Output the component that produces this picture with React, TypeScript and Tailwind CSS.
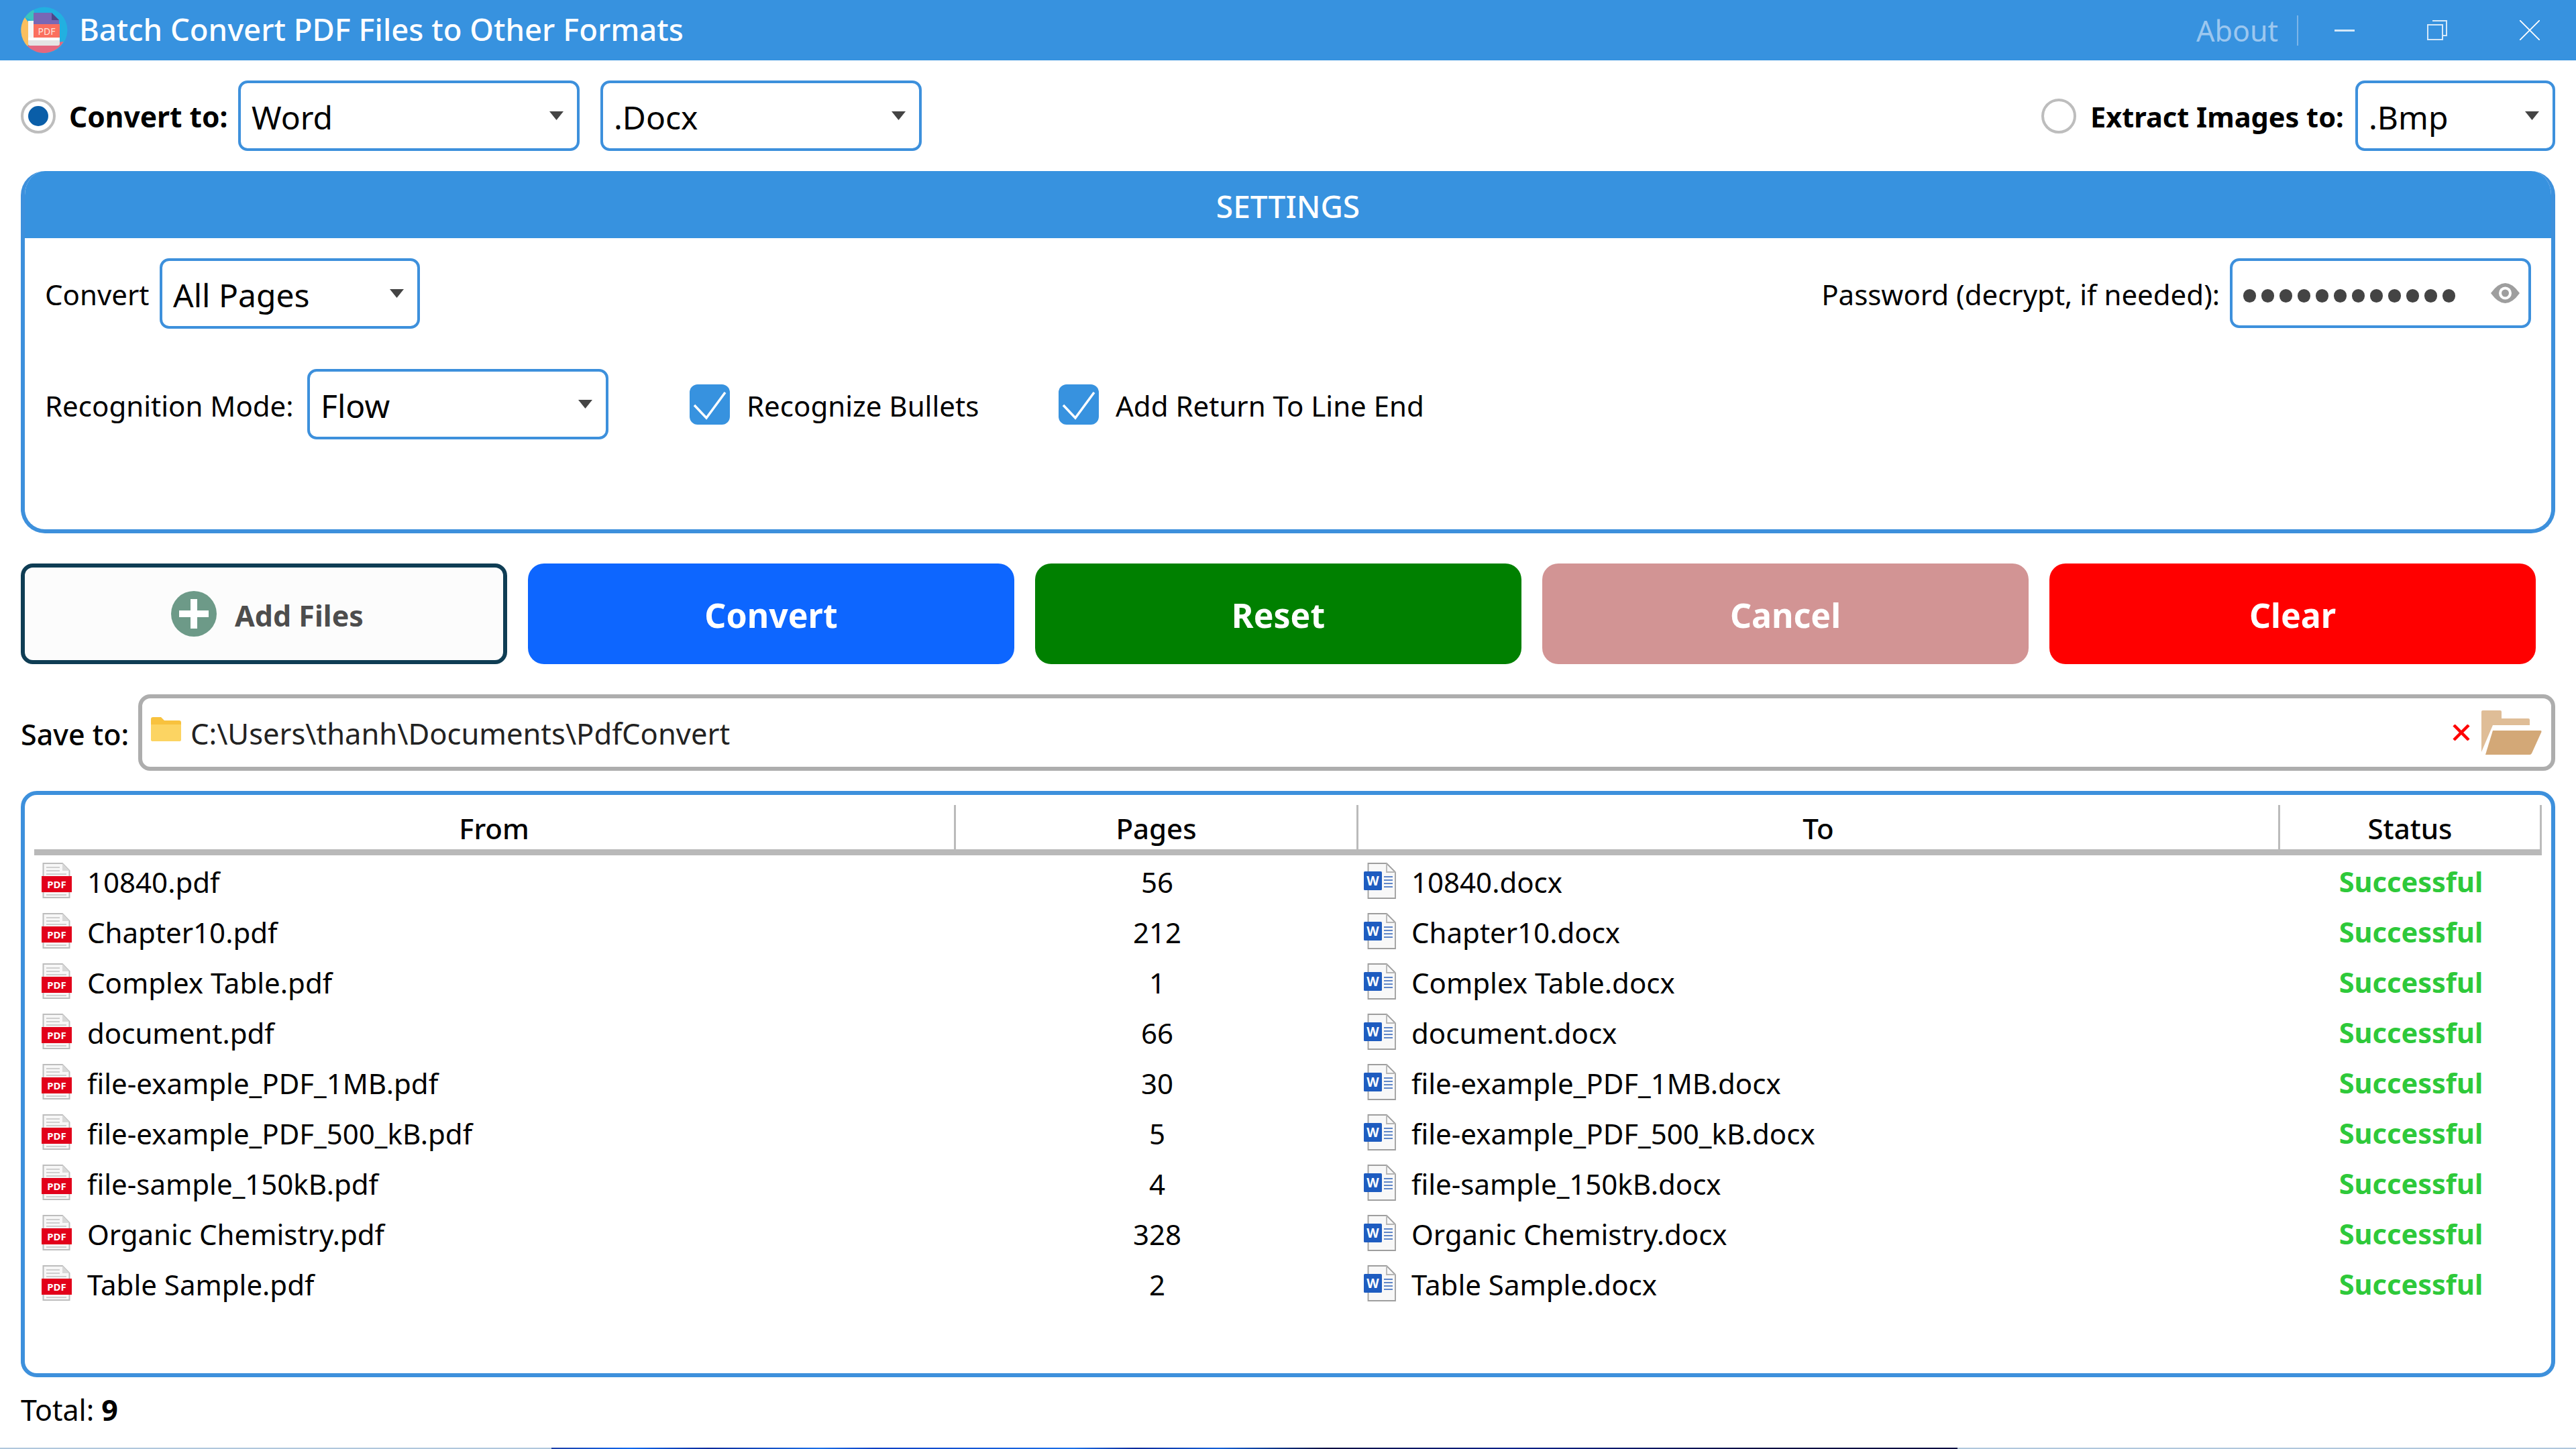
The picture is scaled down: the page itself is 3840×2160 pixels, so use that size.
import React from 'react';

const FONT = "font-['Noto_Sans','Open_Sans',sans-serif]";

const FILES = [
  { name: '10840', pages: 56 },
  { name: 'Chapter10', pages: 212 },
  { name: 'Complex Table', pages: 1 },
  { name: 'document', pages: 66 },
  { name: 'file-example_PDF_1MB', pages: 30 },
  { name: 'file-example_PDF_500_kB', pages: 5 },
  { name: 'file-sample_150kB', pages: 4 },
  { name: 'Organic Chemistry', pages: 328 },
  { name: 'Table Sample', pages: 2 },
];

function AppLogo() {
  return (
    <svg viewBox="0 0 70 70" className="w-[70px] h-[70px] shrink-0">
      <circle cx="35" cy="35" r="34.5" fill="#22b0e0" />
      <path d="M6 16 A34.5 34.5 0 0 1 19 4.5 L24 24 Z" fill="#3cc4c0" />
      <path d="M6 16 A34.5 34.5 0 0 0 10 59 L24 40 Z" fill="#fbbf5e" />
      <path d="M10 58 L64 52 A34.5 34.5 0 0 1 10 59 Z" fill="#e4677f" />
      <rect x="11" y="21" width="10" height="27" fill="#f6f6f6" />
      <path d="M11 46 H58 V55 Q58 58 55 58 H14 Q11 58 11 55 Z" fill="#e4e4e4" />
      <path d="M11 46 H58 V50 H11 Z" fill="#ffffff" />
      <path d="M19 9 H46 L57 20 V27 H19 Z" fill="#7867b5" />
      <path d="M46 9 L57 20 H46 Z" fill="#4d4888" />
      <rect x="19" y="26" width="39" height="20" fill="#fb6f5e" />
      <text x="38.5" y="42" textAnchor="middle" fontSize="14" fontFamily="Noto Sans" fill="#fde6dd">PDF</text>
    </svg>
  );
}

function Arrow() {
  return (
    <svg viewBox="0 0 21 13" className="w-[21px] h-[13px] shrink-0">
      <path d="M0 0 H21 L10.5 13 Z" fill="#444444" />
    </svg>
  );
}

function Select({ value, className }: { value: string; className: string }) {
  return (
    <div className={`flex items-center justify-between h-[105px] pl-[16px] pr-[20px] border-[4px] border-[#3d90dc] rounded-[14px] bg-white shrink-0 ${className}`}>
      <span className="mt-[5px] text-[48px] leading-none text-black">{value}</span>
      <Arrow />
    </div>
  );
}

function Radio({ checked }: { checked?: boolean }) {
  return (
    <div className="w-[52px] h-[52px] rounded-full border-[4px] border-[#bdbdbd] flex items-center justify-center shrink-0 bg-white">
      {checked && <div className="w-[30px] h-[30px] rounded-full bg-[#0a5ea8]" />}
    </div>
  );
}

function Checkbox() {
  return (
    <div className="w-[60px] h-[60px] rounded-[12px] bg-[#3792df] flex items-center justify-center shrink-0">
      <svg viewBox="0 0 60 60" className="w-[60px] h-[60px]">
        <path d="M7 31 L25 50 L53 12" fill="none" stroke="white" strokeWidth="3.5" />
      </svg>
    </div>
  );
}

function PdfIcon() {
  return (
    <svg viewBox="0 0 45 53" className="w-[45px] h-[53px] shrink-0">
      <path d="M2.5 1 H31 L41.5 12 V52 H2.5 Z" fill="#f7f7f7" stroke="#bdbdbd" strokeWidth="2" />
      <path d="M31 1 V12 H41.5 Z" fill="#d8d8d8" />
      <path d="M7 7 H27 M7 12 H27 M7 17 H37 M7 48 H37" stroke="#cfcfcf" strokeWidth="2" />
      <rect x="0" y="20" width="45" height="24" fill="#e2001a" />
      <text x="22.5" y="37.5" textAnchor="middle" fontSize="15" fontWeight="700" fontFamily="Noto Sans" fill="#ffffff">PDF</text>
    </svg>
  );
}

function WordIcon() {
  return (
    <svg viewBox="0 0 48 54" className="w-[48px] h-[54px] shrink-0">
      <path d="M6.5 1 H34 L47 14 V53 H6.5 Z" fill="#f8f8f8" stroke="#9e9e9e" strokeWidth="1.8" />
      <path d="M34 1 V14 H47" fill="none" stroke="#b5b5b5" strokeWidth="1.8" />
      <rect x="0" y="13" width="27" height="28" rx="1.5" fill="#1e5cc0" />
      <text x="13.5" y="33.5" textAnchor="middle" fontSize="19" fontWeight="700" fontFamily="Noto Sans" fill="#ffffff">W</text>
      <path d="M30 21 H43 M30 26 H43 M30 31 H43 M30 36 H43" stroke="#5f86c8" strokeWidth="2" />
    </svg>
  );
}

function OpenFolder() {
  return (
    <svg viewBox="0 0 90 66" className="w-[90px] h-[66px] shrink-0">
      <path d="M0 2 q0 -2 2 -2 h26 q2 0 2 2 v10 h40 q2 0 2 2 v8 H17 L0 62 Z" fill="#dfbd97" />
      <path d="M17 30 H88 q2 0 1.5 2 L75 64 q-1 2 -3 2 H6 Z" fill="#d3a877" />
    </svg>
  );
}

function SmallFolder() {
  return (
    <svg viewBox="0 0 45 36" className="w-[45px] h-[36px] shrink-0">
      <path d="M0 3 q0 -3 3 -3 h12 l5 5 h22 q3 0 3 3 v25 q0 3 -3 3 H3 q-3 0 -3 -3 Z" fill="#f8c23e" />
      <path d="M0 11 H45 V33 q0 3 -3 3 H3 q-3 0 -3 -3 Z" fill="#fcd462" />
    </svg>
  );
}

function Eye() {
  return (
    <svg viewBox="0 0 43 30" className="w-[43px] h-[30px] shrink-0">
      <path d="M0 15 Q21.5 -15 43 15 Q21.5 45 0 15 Z" fill="#9e9e9e" />
      <circle cx="21.5" cy="15" r="9.5" fill="#ffffff" />
      <circle cx="21.5" cy="15" r="5.5" fill="#9e9e9e" />
    </svg>
  );
}

function ActionButton({ label, className }: { label: string; className: string }) {
  return (
    <div className={`w-[725px] h-full pt-[4px] rounded-[24px] flex items-center justify-center text-white font-bold text-[50px] ${className}`}>
      {label}
    </div>
  );
}

export default function App() {
  return (
    <div className={`w-[3840px] h-[2160px] flex flex-col bg-white overflow-hidden ${FONT}`}>
      {/* Title bar */}
      <div className="h-[90px] bg-[#3792df] flex items-center pl-[31px] shrink-0">
        <AppLogo />
        <span className="ml-[17px] mb-[2px] text-[45.5px] font-medium text-white leading-none">Batch Convert PDF Files to Other Formats</span>
        <div className="ml-auto flex items-center">
          <span className="text-[43px] text-[#9cc7ef] leading-none">About</span>
          <div className="ml-[28px] w-[2px] h-[45px] bg-[#7db5e8]" />
          <div className="ml-[54px] w-[30px] h-[3px] bg-[#d5e8f8]" />
          <svg viewBox="0 0 30 30" className="ml-[108px] w-[30px] h-[30px]">
            <path d="M8 1 H29 V23 H24 M1 7 H23 V29 H1 Z" fill="none" stroke="#d5e8f8" strokeWidth="2" />
          </svg>
          <svg viewBox="0 0 30 30" className="ml-[108px] mr-[54px] w-[30px] h-[30px]">
            <path d="M0 0 L30 30 M30 0 L0 30" stroke="#ffffff" strokeWidth="1.8" />
          </svg>
        </div>
      </div>

      {/* Convert target */}
      <div className="mt-[30px] h-[105px] px-[31px] flex items-center shrink-0">
        <Radio checked />
        <span className="ml-[20px] w-[252px] mt-[4px] text-[42.5px] font-bold text-black leading-none whitespace-nowrap">Convert to:</span>
        <Select value="Word" className="w-[509px]" />
        <Select value=".Docx" className="ml-[31px] w-[479px]" />
        <div className="ml-auto flex items-center">
          <Radio />
          <span className="ml-[21px] w-[395px] mt-[4px] text-[41.5px] font-bold text-black leading-none whitespace-nowrap">Extract Images to:</span>
          <Select value=".Bmp" className="w-[298px]" />
        </div>
      </div>

      {/* Settings */}
      <div className="mt-[30px] mx-[31px] h-[540px] border-[6px] border-t-0 border-[#3d90dc] rounded-[36px] overflow-hidden shrink-0">
        <div className="h-[100px] pt-[4px] bg-[#3792df] flex items-center justify-center text-white text-[46px] font-medium -mx-[6px]">SETTINGS</div>
        <div className="pt-[30px] pl-[30px] pr-[30px] text-[42px] text-black">
          <div className="flex items-center h-[104px]">
            <span className="w-[171px] mt-[4px] leading-none">Convert</span>
            <Select value="All Pages" className="w-[388px]" />
            <span className="ml-auto mr-[15px] mt-[4px] leading-none">Password (decrypt, if needed):</span>
            <div className="w-[449px] h-[104px] border-[4px] border-[#3d90dc] rounded-[14px] flex items-center pl-[16px] pr-[13px]">
              <div className="flex gap-[8px] mt-[8px]">
                {Array.from({ length: 12 }).map((_, i) => (
                  <span key={i} className="w-[19px] h-[20px] rounded-full bg-[#444444]" />
                ))}
              </div>
              <div className="ml-auto"><Eye /></div>
            </div>
          </div>
          <div className="flex items-center h-[105px] mt-[61px]">
            <span className="w-[391px] mt-[4px] leading-none">Recognition Mode:</span>
            <Select value="Flow" className="w-[449px]" />
            <div className="ml-[121px]"><Checkbox /></div>
            <span className="ml-[25px] w-[465px] mt-[4px] leading-none">Recognize Bullets</span>
            <Checkbox />
            <span className="ml-[25px] mt-[4px] leading-none">Add Return To Line End</span>
          </div>
        </div>
      </div>

      {/* Actions */}
      <div className="mt-[45px] h-[150px] pl-[31px] flex gap-[31px] shrink-0">
        <div className="w-[725px] h-full pl-[10px] border-[6px] border-[#0f3d54] rounded-[18px] bg-[#fcfcfc] flex items-center justify-center gap-[27px]">
          <svg viewBox="0 0 68 68" className="w-[68px] h-[68px]">
            <circle cx="34" cy="34" r="34" fill="#6d9a88" />
            <path d="M29 12 H39 V29 H56 V39 H39 V56 H29 V39 H12 V29 H29 Z" fill="#ffffff" />
          </svg>
          <span className="mt-[4px] text-[43px] font-bold text-[#4d4d4d] leading-none">Add Files</span>
        </div>
        <ActionButton label="Convert" className="bg-[#0d66ff]" />
        <ActionButton label="Reset" className="bg-[#008000]" />
        <ActionButton label="Cancel" className="bg-[#d29494]" />
        <ActionButton label="Clear" className="bg-[#ff0000]" />
      </div>

      {/* Save to */}
      <div className="mt-[45px] h-[114px] px-[31px] flex items-center shrink-0">
        <span className="w-[175px] mt-[4px] text-[43px] font-medium text-black leading-none">Save to:</span>
        <div className="flex-1 h-full border-[6px] border-[#adadad] rounded-[18px] flex items-center pl-[13px] pr-[14px]">
          <div className="mb-[10px]"><SmallFolder /></div>
          <span className="ml-[14px] mt-[4px] text-[43.5px] text-[#222222] leading-none">C:\Users\thanh\Documents\PdfConvert</span>
          <svg viewBox="0 0 26 24" className="ml-auto w-[26px] h-[24px]">
            <path d="M2 1 L24 23 M24 1 L2 23" stroke="#ff0000" strokeWidth="4.5" />
          </svg>
          <div className="ml-[17px]"><OpenFolder /></div>
        </div>
      </div>

      {/* File table */}
      <div className="mt-[30px] mx-[31px] h-[874px] border-[6px] border-[#3d90dc] rounded-[24px] pt-[15px] pl-[14px] pr-[14px] shrink-0">
        <div className="grid grid-cols-[1374px_600px_1374px_1fr] text-[42px] text-black">
          {['From', 'Pages', 'To', 'Status'].map((h) => (
            <div key={h} className="h-[75px] border-b-[9px] border-[#b9b9b9] flex items-stretch">
              <div className="flex-1 h-[66px] pt-[4px] flex items-center justify-center font-medium leading-none">{h}</div>
              <div className="w-[3px] h-[66px] bg-[#bbbbbb]" />
            </div>
          ))}
          {FILES.map((f) => (
            <React.Fragment key={f.name}>
              <div className="h-[75px] flex items-center pl-[11px]">
                <PdfIcon />
                <span className="ml-[23px] mt-[5px] leading-none">{f.name}.pdf</span>
              </div>
              <div className="h-[75px] pt-[5px] flex items-center justify-center leading-none">{f.pages}</div>
              <div className="h-[75px] flex items-center pl-[8px]">
                <WordIcon />
                <span className="ml-[23px] mt-[5px] leading-none">{f.name}.docx</span>
              </div>
              <div className="h-[75px] pt-[5px] flex items-center justify-center font-bold text-[#2ec93a] text-[41.5px] leading-none">Successful</div>
            </React.Fragment>
          ))}
        </div>
      </div>

      {/* Footer */}
      <div className="h-[96px] pl-[31px] flex items-center text-[43px] text-black shrink-0">
        <span className="leading-none">Total: <span className="font-bold">9</span></span>
      </div>
      <div className="flex-1" />
      <div className="h-[2px] shrink-0 bg-[linear-gradient(90deg,#b0c7dd_21.4%,#1c3fa8_21.4%,#0f67ef_24.5%,#0b2a9c_27.5%,#1b6fe8_31.8%,#0d3fc4_34%,#1b6fe8_41.7%,#0b2a9c_44.1%,#1460d8_47.3%,#050b40_51.5%,#04208a_58.7%,#050b40_68.4%,#050b40_76%,#b0c7dd_76%)]" />
    </div>
  );
}
